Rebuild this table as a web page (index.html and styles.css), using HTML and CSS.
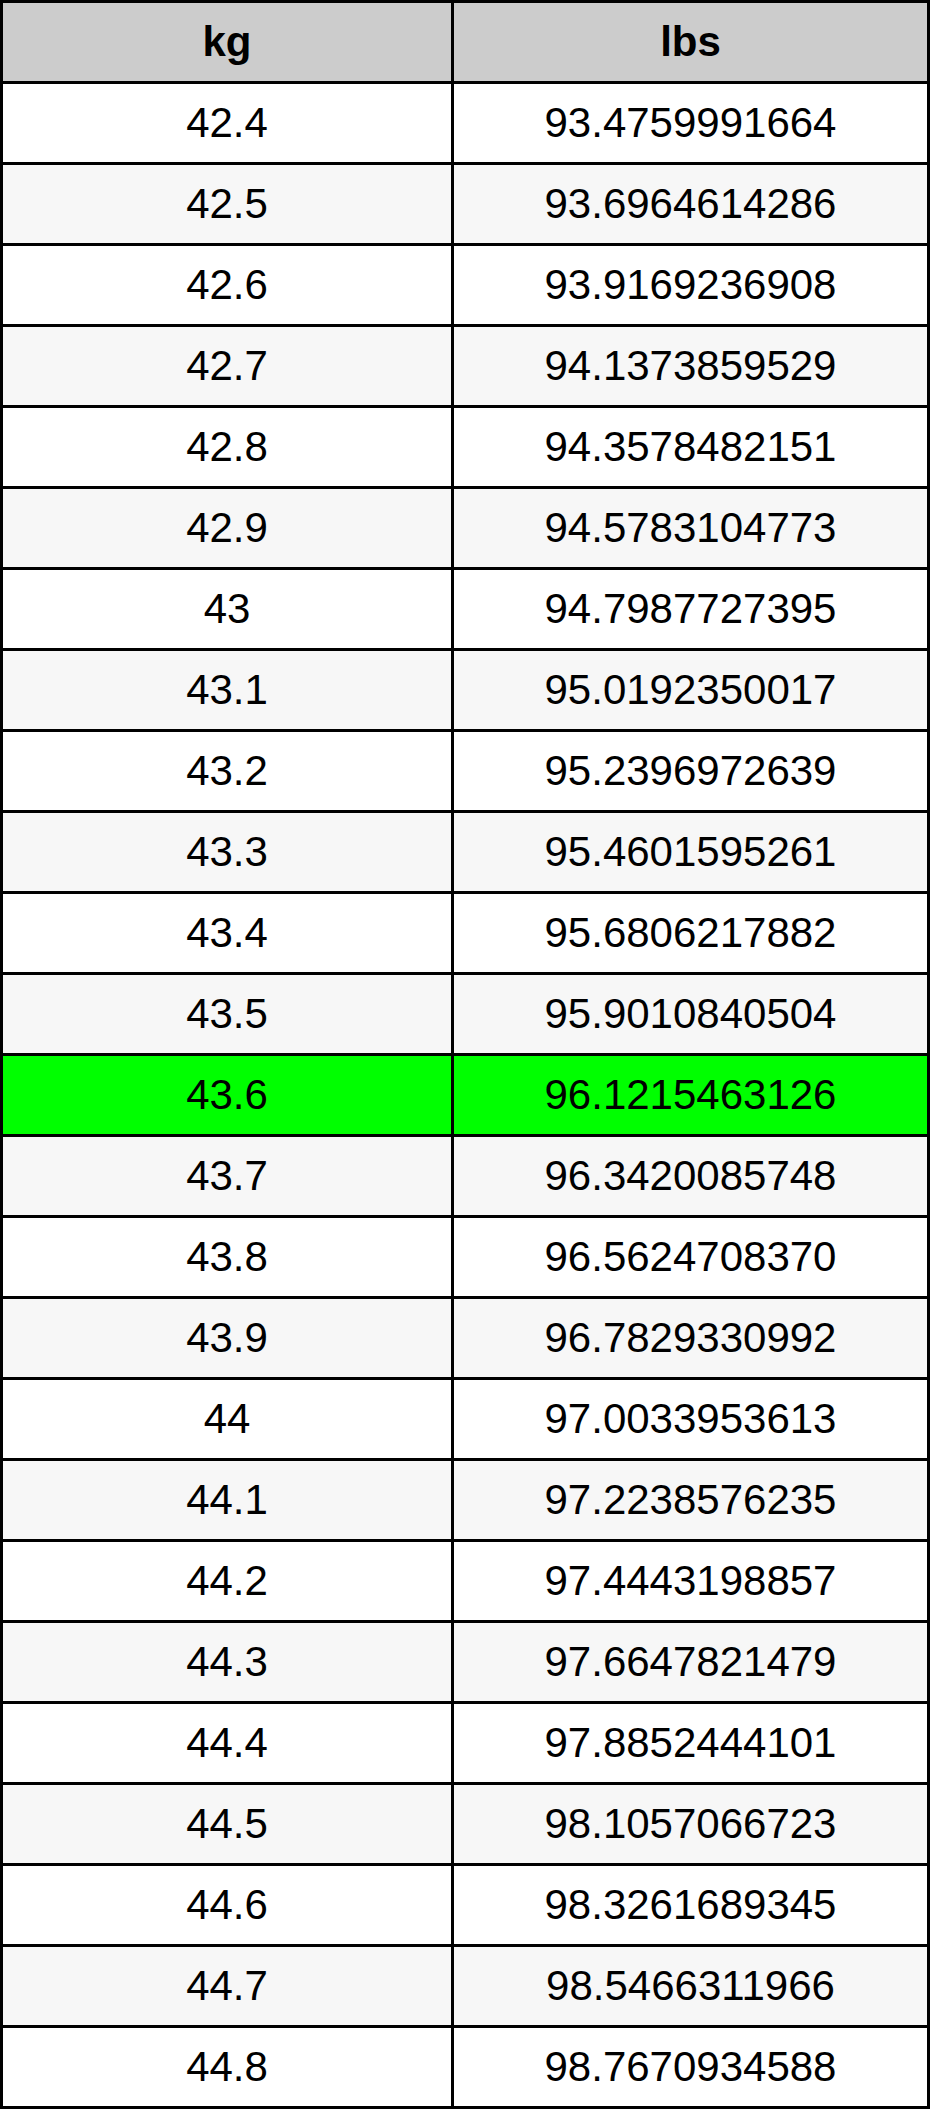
FILE: index.html
```html
<!DOCTYPE html>
<html lang="en">
<head>
<meta charset="utf-8">
<title>kg to lbs</title>
<link rel="stylesheet" href="styles.css">
</head>
<body>
<table class="conv">
<thead>
<tr><th class="c1">kg</th><th class="c2">lbs</th></tr>
</thead>
<tbody>
<tr><td>42.4</td><td>93.4759991664</td></tr>
<tr><td>42.5</td><td>93.6964614286</td></tr>
<tr><td>42.6</td><td>93.9169236908</td></tr>
<tr><td>42.7</td><td>94.1373859529</td></tr>
<tr><td>42.8</td><td>94.3578482151</td></tr>
<tr><td>42.9</td><td>94.5783104773</td></tr>
<tr><td>43</td><td>94.7987727395</td></tr>
<tr><td>43.1</td><td>95.0192350017</td></tr>
<tr><td>43.2</td><td>95.2396972639</td></tr>
<tr><td>43.3</td><td>95.4601595261</td></tr>
<tr><td>43.4</td><td>95.6806217882</td></tr>
<tr><td>43.5</td><td>95.9010840504</td></tr>
<tr class="hl"><td>43.6</td><td>96.1215463126</td></tr>
<tr><td>43.7</td><td>96.3420085748</td></tr>
<tr><td>43.8</td><td>96.5624708370</td></tr>
<tr><td>43.9</td><td>96.7829330992</td></tr>
<tr><td>44</td><td>97.0033953613</td></tr>
<tr><td>44.1</td><td>97.2238576235</td></tr>
<tr><td>44.2</td><td>97.4443198857</td></tr>
<tr><td>44.3</td><td>97.6647821479</td></tr>
<tr><td>44.4</td><td>97.8852444101</td></tr>
<tr><td>44.5</td><td>98.1057066723</td></tr>
<tr><td>44.6</td><td>98.3261689345</td></tr>
<tr><td>44.7</td><td>98.5466311966</td></tr>
<tr><td>44.8</td><td>98.7670934588</td></tr>
</tbody>
</table>
</body>
</html>
```
FILE: styles.css
```css
html, body {
  margin: 0;
  padding: 0;
  background: #ffffff;
}

.conv {
  border-collapse: separate;
  border-spacing: 3px;
  background: #000000;
  width: 930px;
  table-layout: fixed;
  font-family: "Liberation Sans", Arial, Helvetica, sans-serif;
  font-size: 42px;
  color: #000000;
}

.conv th,
.conv td {
  height: 78px;
  padding: 0;
  text-align: center;
  vertical-align: middle;
  background: #ffffff;
}

.conv th {
  background: #cccccc;
  font-weight: bold;
}

.conv .c1 { width: 448px; }
.conv .c2 { width: 473px; }

.conv tbody tr:nth-child(even) td {
  background: #f7f7f7;
}

.conv tbody tr.hl td {
  background: #00ff00;
}
```
